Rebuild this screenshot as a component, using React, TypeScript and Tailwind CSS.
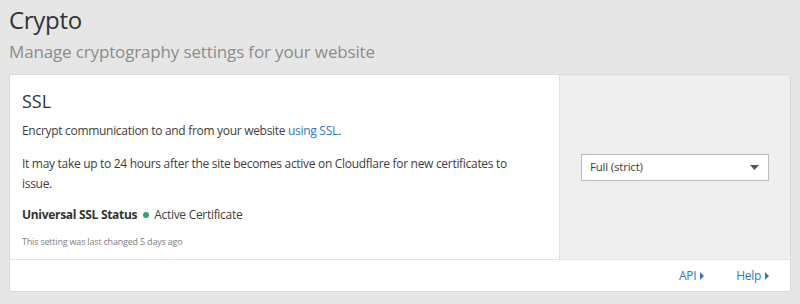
import React from 'react';

const App: React.FC = () => {
  return (
    <div
      className="w-[800px] h-[304px] bg-[#e6e6e6] px-[9px] pt-[4px] text-[#333]"
      style={{ fontFamily: '"Open Sans", "Noto Sans", sans-serif' }}
    >
      <h1 className="text-[24px] leading-[32px] tracking-[-0.3px] text-[#333]">Crypto</h1>
      <p className="mt-[4px] text-[17px] leading-[24px] tracking-[-0.15px] text-[#8c8c8c]">
        Manage cryptography settings for your website
      </p>

      {/* SSL card */}
      <div className="mt-[10px] w-[782px] bg-white border border-[#d9d9d9] rounded-[2px]">
        <div className="flex">
          <div className="w-[549px] pl-[12px] pr-4 pt-[13px] pb-[10px]">
            <h2 className="text-[18px] leading-[26px] text-[#333]">SSL</h2>
            <div className="text-[12px] leading-[20px] tracking-[-0.3px] text-[#404040]">
              <p className="mt-[7px]">
                Encrypt communication to and from your website{' '}
                <a className="text-[#2f7bbf]">using SSL</a>.
              </p>
              <p className="mt-[13px] pr-[24px]">
                It may take up to 24 hours after the site becomes active on Cloudflare for new certificates to issue.
              </p>
              <div className="mt-[11px] flex items-center">
                <span className="font-bold text-[#333]">Universal SSL Status</span>
                <span className="ml-[6px] mr-[5px] h-[6px] w-[6px] rounded-full bg-[#2ba36b]" />
                <span>Active Certificate</span>
              </div>
            </div>
            <p className="mt-[10px] text-[9px] leading-[14px] tracking-[-0.2px] text-[#808080]">
              This setting was last changed 5 days ago
            </p>
          </div>
          <div className="flex-1 bg-[#efefef] border-l border-[#e0e0e0] flex items-center justify-center">
            <div className="w-[188px] h-[27px] bg-white border border-[#bcbcbc] flex items-center justify-between pl-[8px] pr-[9px]">
              <span className="text-[11.5px] tracking-[-0.2px] text-[#404040]">Full (strict)</span>
              <svg width="9" height="5" viewBox="0 0 9 5">
                <path d="M0 0h9L4.5 5z" fill="#555" />
              </svg>
            </div>
          </div>
        </div>
        <div className="h-[32px] border-t border-[#e3e3e3] flex items-center justify-end gap-[32px] pr-[21px] text-[12px] tracking-[-0.3px] text-[#2f7bbf]">
          <span className="flex items-center gap-[4px]">
            API
            <svg width="4" height="8" viewBox="0 0 4 8">
              <path d="M0 0l4 4-4 4z" fill="#2f7bbf" />
            </svg>
          </span>
          <span className="flex items-center gap-[4px]">
            Help
            <svg width="4" height="8" viewBox="0 0 4 8">
              <path d="M0 0l4 4-4 4z" fill="#2f7bbf" />
            </svg>
          </span>
        </div>
      </div>
    </div>
  );
};

export default App;
